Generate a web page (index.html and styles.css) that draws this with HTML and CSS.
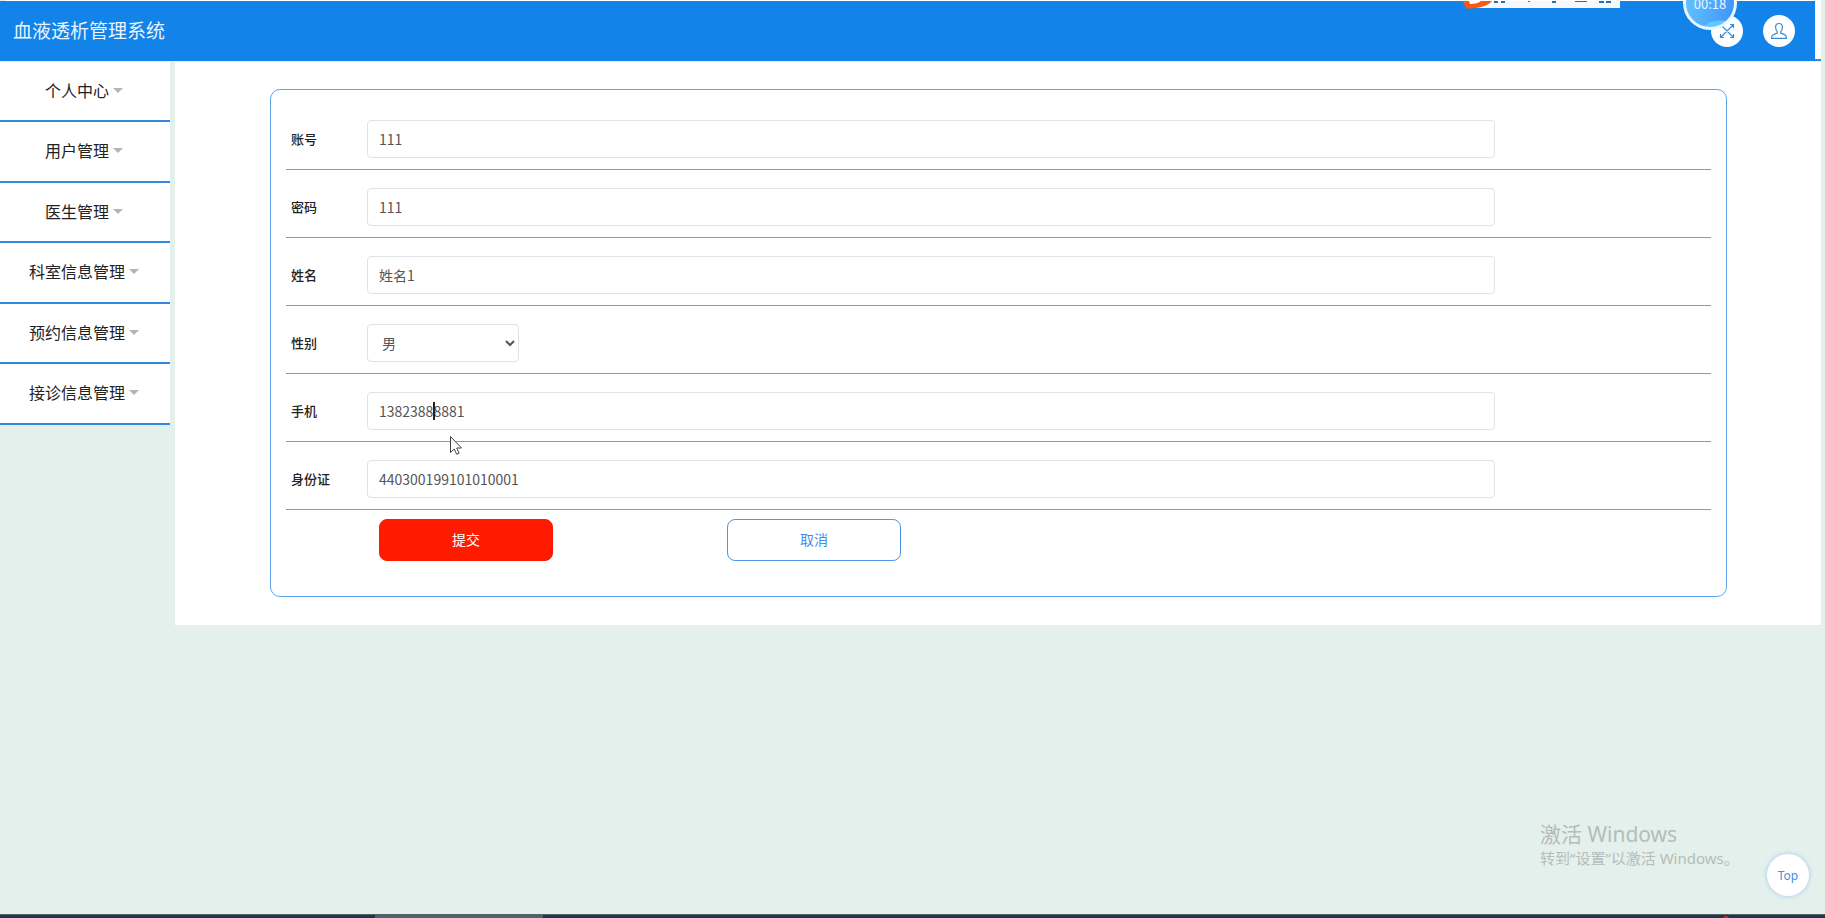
FILE: index.html
```html
<!DOCTYPE html>
<html lang="zh-CN">
<head>
<meta charset="utf-8">
<title>血液透析管理系统</title>
<link rel="stylesheet" href="styles.css">
</head>
<body>
<div class="page">
  <header class="topbar">
    <h1 class="brand">血液透析管理系统</h1>
    <div class="actions">
      <button class="round" type="button" aria-label="全屏">
        <svg viewBox="0 0 16 16" width="16" height="16"><path d="M2 2l12 12M14 2L2 14M1.500 5V1.500H5M11 1.500h3.500V5M14.500 11v3.500H11M5 14.500H1.500V11"/></svg>
      </button>
      <button class="round" type="button" aria-label="用户">
        <svg viewBox="0 0 18 18" width="18" height="18"><path d="M9 1.500C6.600 1.500 5.400 3.200 5.600 5.500c.1 2 .8 3.300 1.700 4.200v1.300L3.400 12.600C2 13.200 1.500 14.200 1.500 16.300h15c0-2.100-.5-3.100-1.900-3.700L10.700 11V9.700c.9-.9 1.600-2.200 1.700-4.200.2-2.300-1-4-3.400-4z"/></svg>
      </button>
    </div>
  </header>

  <div class="layout">
    <nav class="sidebar">
      <ul class="menu">
        <li><a href="#">个人中心</a></li>
        <li><a href="#">用户管理</a></li>
        <li><a href="#">医生管理</a></li>
        <li><a href="#">科室信息管理</a></li>
        <li><a href="#">预约信息管理</a></li>
        <li><a href="#">接诊信息管理</a></li>
      </ul>
    </nav>
    <main class="content">
      <form class="card">
        <div class="row"><label for="account">账号</label><input id="account" type="text" value="111"></div>
        <div class="row"><label for="password">密码</label><input id="password" type="text" value="111"></div>
        <div class="row"><label for="name">姓名</label><input id="name" type="text" value="姓名1"></div>
        <div class="row"><label for="gender">性别</label><select id="gender"><option>男</option><option>女</option></select></div>
        <div class="row"><label for="phone">手机</label><span class="field"><input id="phone" type="text" value="13823888881"><i class="caret"></i></span></div>
        <div class="row"><label for="idcard">身份证</label><input id="idcard" type="text" value="440300199101010001"></div>
        <div class="buttons">
          <button class="btn submit" type="button">提交</button>
          <button class="btn cancel" type="button">取消</button>
        </div>
      </form>
    </main>
  </div>
</div>

<div class="ime">
  <svg viewBox="0 0 158 9" width="158" height="9">
    <path class="ime-bg" d="M2 1H157V8H8z"/>
    <path class="ime-logo" d="M0 1h29C25 6 14 9 3 8.500z"/>
    <path class="ime-shine" d="M6 1h12c-2 2-6 3-11 3z"/>
    <path class="ime-mark" d="M31 1h4v2h-4zM38 1h4v2h-4zM65 1h2v1h-2zM89 1h4v2h-4zM112 1h12v1h-12zM136 1h5v2h-5zM143 1h5v2h-5z"/>
  </svg>
</div>
<div class="timer">00:18</div>
<svg class="pointer" viewBox="0 0 12 19" width="12" height="19"><path d="M.5.5v16l3.700-3.500 2.500 5.300 2.400-1.100L6.700 12h4.800z"/></svg>
<div class="watermark"><p class="wm-title">激活 Windows</p><p class="wm-text">转到“设置”以激活 Windows。</p></div>
<button class="to-top" type="button">Top</button>
<div class="taskbar"><span class="task"></span><span class="alert"></span></div>
</body>
</html>
```
FILE: styles.css
```css
* { box-sizing: border-box; }
html { height: 100%; overflow: hidden; }
body {
  margin: 0;
  height: 100%;
  background: #e4f0ec;
  color: #222;
  font-family: "Noto Sans CJK SC", "Noto Sans", sans-serif;
  font-size: 13px;
}
button, input, select { font-family: inherit; margin: 0; }

.page { margin-right: 4px; border-top: 1px solid #e8edf0; }
.topbar {
  display: flex;
  align-items: center;
  justify-content: space-between;
  height: 60px;
  margin-right: 6px;
  padding: 0 20px 2px 13px;
  background: #1283e9;
  box-shadow: 6px -2px #fff, 6px 0 #3288dd;
}
.brand { margin: 0; color: #e8f4ff; font-size: 19px; font-weight: 400; line-height: 28px; }
.actions { display: flex; gap: 20px; padding-top: 1px; }
.round {
  display: grid;
  place-items: center;
  width: 32px;
  height: 32px;
  padding: 0;
  border: 0;
  border-radius: 50%;
  background: #fff;
}
.round svg { fill: none; stroke: #3c8bd2; stroke-width: 1.200; }

.layout {
  display: grid;
  grid-template-columns: 170px 1fr;
  column-gap: 5px;
  align-items: start;
  padding-top: 1px;
}
.menu { margin: 0; padding: 0; list-style: none; }
.menu li { background: #fff; border-bottom: 2px solid #3288dd; }
.menu li:nth-child(even) { padding-bottom: 1px; }
.menu a {
  display: flex;
  align-items: center;
  justify-content: center;
  gap: 4px;
  height: 58px;
  padding: 0 2px 2px 0;
  color: #222;
  font-size: 16px;
  text-decoration: none;
}
.menu a::after {
  content: "";
  border: 5px solid transparent;
  border-top-color: #b4b4b4;
  border-bottom: 0;
}

.content { padding: 27px 94px 28px 95px; background: #fff; }
.card {
  padding: 12px 15px 35px;
  border: 1px solid #5ea3ec;
  border-radius: 10px;
}
.row {
  display: flex;
  align-items: center;
  padding: 18px 216px 11px 5px;
  border-bottom: 1px solid #5ea3ec;
}
.row label { flex: none; width: 76px; padding-bottom: 2px; font-weight: 500; }
.row input, .row select {
  height: 38px;
  border: 1px solid #dfe2e9;
  border-radius: 4px;
  background: #fff;
  color: #555;
  font-size: 14px;
  outline: 0;
}
.row input { flex: 1; min-width: 0; width: 100%; padding: 0 11px; }
.row select { width: 152px; padding: 0 0 0 10px; }
.field { position: relative; display: flex; flex: 1; }
.caret { position: absolute; left: 66px; top: 10px; width: 2px; height: 18px; background: #222; }

.buttons { display: flex; gap: 174px; padding: 9px 0 0 93px; }
.btn {
  width: 174px;
  height: 42px;
  padding: 0 0 2px;
  border: 1px solid #ff1a00;
  border-radius: 8px;
  font-size: 14px;
}
.submit { background: #ff1a00; color: #fff; }
.cancel { border-color: #4d98e5; background: #fff; color: #3c8ef0; }

.ime { position: absolute; top: 0; right: 204px; height: 9px; }
.ime svg { display: block; }
.ime-bg { fill: #f5f9fd; }
.ime-logo { fill: #fa5a10; }
.ime-shine { fill: #fff; }
.ime-mark { fill: #2270b8; }
.timer {
  position: absolute;
  top: -24px;
  right: 88px;
  width: 54px;
  height: 54px;
  border: 3px solid #eef6fd;
  border-radius: 50%;
  background:
    radial-gradient(circle at 34px 68px, #5fcaff 26px, transparent 27px),
    linear-gradient(100deg, #66c5ff, #3d93fb);
  color: #e8f6ff;
  font-size: 13px;
  line-height: 49px;
  text-align: center;
}
.pointer { position: absolute; left: 450px; top: 436px; fill: #fff; stroke: #444; }
.watermark {
  position: absolute;
  right: 84px;
  bottom: 50px;
  width: 201px;
  color: #b5bcba;
  font-family: "Noto Sans", "Noto Sans CJK SC", sans-serif;
  white-space: nowrap;
}
.watermark p { margin: 0; }
.wm-title { font-size: 21px; line-height: 28px; }
.wm-text { font-size: 15px; line-height: 20px; }
.to-top {
  position: absolute;
  right: 16px;
  bottom: 22px;
  width: 42px;
  height: 42px;
  padding: 0;
  border: 0;
  border-radius: 50%;
  background: #fff;
  box-shadow: 0 0 5px #9ccbf0;
  color: #3d92e5;
  font-family: "Noto Sans", sans-serif;
  font-size: 12px;
}
.taskbar {
  position: absolute;
  left: 0;
  right: 0;
  bottom: 0;
  height: 4px;
  overflow: hidden;
  border-top: 1px solid #52656c;
  background: #223547;
}
.task { position: absolute; left: 375px; top: 0; width: 168px; height: 3px; background: #53606d; }
.alert { position: absolute; right: 96px; top: 1px; width: 6px; height: 6px; border-radius: 50%; background: #e02020; }
```
